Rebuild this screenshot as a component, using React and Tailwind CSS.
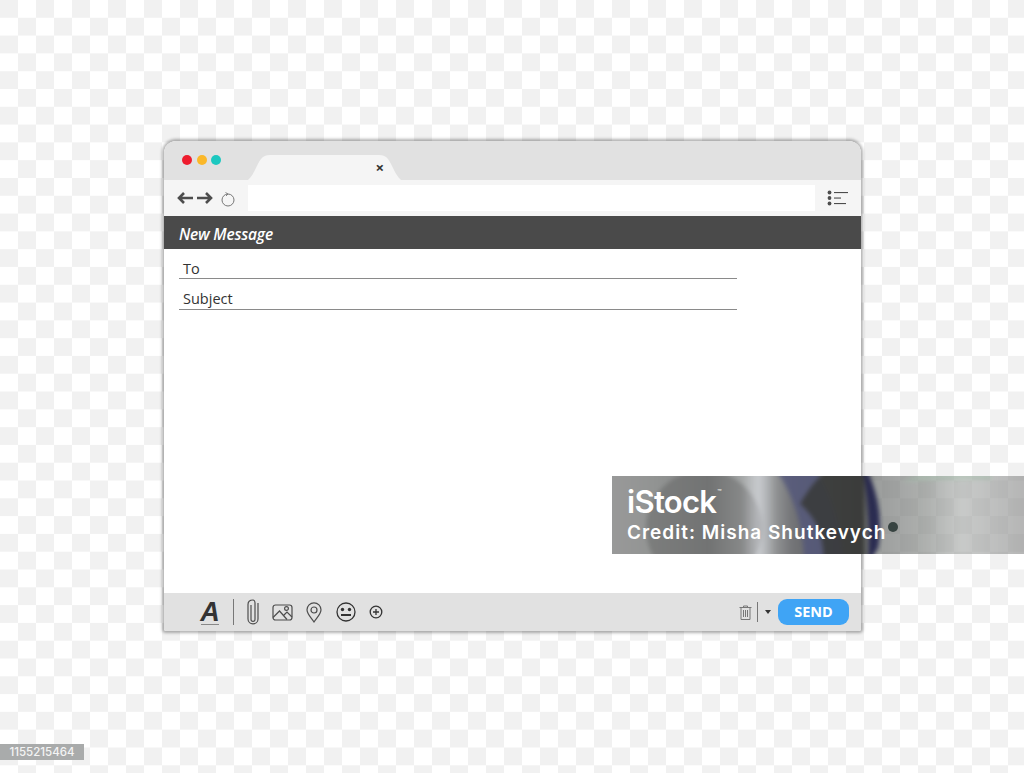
import React from 'react';

const openSans = "font-['Open_Sans',sans-serif]";

function BackForward() {
  return (
    <svg width="36" height="14" viewBox="0 0 36 14" fill="none" stroke="#4d4d4d" strokeWidth="2.600">
      <path d="M16 7H2M7 2 2 7l5 5" />
      <path d="M20 7h14M29 2l5 5-5 5" />
    </svg>
  );
}

function Reload() {
  return (
    <svg width="14" height="16" viewBox="0 0 14 16" fill="none" stroke="#777" strokeWidth="1">
      <circle cx="7" cy="9" r="6" />
      <path d="M4.500 1.500 7 3 5 5" strokeWidth="0.900" />
    </svg>
  );
}

function ListIcon() {
  return (
    <svg width="22" height="16" viewBox="0 0 22 16" fill="#4d4d4d">
      <circle cx="2.500" cy="2.500" r="1.900" />
      <circle cx="2.500" cy="8" r="1.900" />
      <circle cx="2.500" cy="13.500" r="1.900" />
      <rect x="7" y="2" width="14" height="1.100" />
      <rect x="7" y="7.500" width="7" height="1.100" />
      <rect x="7" y="13" width="12" height="1.100" />
    </svg>
  );
}

function Clip() {
  return (
    <svg width="12" height="26" viewBox="0 0 12 26" fill="none" stroke="#4d4d4d" strokeWidth="1.200">
      <path d="M4 6v14.500c0 2.500 4 2.500 4 0V4C8 2 7 1 6 1 3 1 1 2.500 1 5.500V20c0 6.500 10 6.500 10 0V4" />
    </svg>
  );
}

function ImageIcon() {
  return (
    <svg width="21" height="17" viewBox="0 0 21 17" fill="none" stroke="#4d4d4d" strokeWidth="1.200">
      <rect x="1" y="1" width="19" height="15" rx="2.500" />
      <path d="M1 13.500 7.500 7 15 15.500M12 11l3-3 5 5" />
      <circle cx="14.500" cy="4.500" r="1.900" />
    </svg>
  );
}

function Pin() {
  return (
    <svg width="16" height="21" viewBox="0 0 16 21" fill="none" stroke="#4d4d4d" strokeWidth="1.200">
      <path d="M8 20C5 15.500 1 12 1 7.800a7 7 0 0 1 14 0C15 12 11 15.500 8 20Z" />
      <circle cx="8" cy="8" r="3" />
    </svg>
  );
}

function Smile() {
  return (
    <svg width="20" height="20" viewBox="0 0 20 20" fill="none" stroke="#333" strokeWidth="1.300">
      <circle cx="10" cy="10" r="9" />
      <circle cx="6.500" cy="7.500" r="1.700" fill="#333" stroke="none" />
      <circle cx="13.500" cy="7.500" r="1.700" fill="#333" stroke="none" />
      <path d="M5 13h10" strokeWidth="2" />
    </svg>
  );
}

function Plus() {
  return (
    <svg width="14" height="14" viewBox="0 0 14 14" fill="none" stroke="#333" strokeWidth="1.300">
      <circle cx="7" cy="7" r="5.800" />
      <path d="M4 7h6M7 4v6" />
    </svg>
  );
}

function Trash() {
  return (
    <svg width="13" height="15" viewBox="0 0 13 15" fill="none" stroke="#777" strokeWidth="1">
      <path d="M0.500 2.500h12M4.500 2.500V1h4v1.500M2 2.500V14.500h9V2.500M4.500 5v7M6.500 5v7M8.500 5v7" />
    </svg>
  );
}

function Watermark() {
  return (
    <div className="absolute left-[612px] top-[476px] w-[412px] h-[78px] overflow-hidden">
      {/* drawn 12px past the band so the blur doesn't soften its edges */}
      <svg className="absolute left-[-12px] top-[-12px] blur-[2px]" width="436" height="102" viewBox="-12 -12 436 102">
        <defs>
          <linearGradient id="band" x1="0" y1="0" x2="1" y2="0">
            <stop offset="0" stopColor="#959595" stopOpacity="0.95" />
            <stop offset="0.12" stopColor="#8c8e8d" stopOpacity="0.95" />
            <stop offset="0.25" stopColor="#7d7f7f" stopOpacity="0.95" />
            <stop offset="0.36" stopColor="#aeb1b1" stopOpacity="0.95" />
            <stop offset="0.44" stopColor="#6c6d70" stopOpacity="0.95" />
            <stop offset="0.6" stopColor="#3e403e" stopOpacity="0.95" />
            <stop offset="0.63" stopColor="#6f7371" stopOpacity="0.7" />
            <stop offset="0.75" stopColor="#7d817e" stopOpacity="0.62" />
            <stop offset="0.83" stopColor="#a3a6a4" stopOpacity="0.6" />
            <stop offset="1" stopColor="#828282" stopOpacity="0.62" />
          </linearGradient>
          <linearGradient id="sheen" x1="0" y1="0" x2="1" y2="0">
            <stop offset="0" stopColor="#e4e6ee" stopOpacity="0" />
            <stop offset="0.5" stopColor="#e4e6ee" stopOpacity="0.45" />
            <stop offset="1" stopColor="#e4e6ee" stopOpacity="0" />
          </linearGradient>
        </defs>
        <rect x="-12" y="-12" width="436" height="102" fill="url(#band)" />
        <circle cx="92" cy="52" r="58" fill="#4f4f4f" fillOpacity="0.35" />
        <rect x="130" y="-12" width="34" height="102" fill="url(#sheen)" />
        <path d="M160-12h42c6 16 26 40 30 102h-40c0-40-10-72-32-102Z" fill="#54577c" fillOpacity="0.8" />
        <path d="M188 28c16 14 24 30 24 62h40V-12h-28c-14 8-26 22-36 40Z" fill="#383a38" fillOpacity="0.85" />
        <path d="M250-12c14 18 22 54 16 84-4 6-6 10-10 18 2-34 0-70-6-102Z" fill="#20214a" fillOpacity="0.9" />
        <path d="M290 6c26-16 50-10 90-10v8c-30 0-60 0-90 2Z" fill="#a6c4ac" fillOpacity="0.4" />
      </svg>
      <svg className="absolute left-[276px] top-[46px]" width="10" height="10" viewBox="0 0 10 10">
        <circle cx="5" cy="5" r="5" fill="#374341" />
      </svg>
      <div className="relative pl-[15px] pt-[10px] font-['Inter',sans-serif] text-white">
        <div className="flex items-start h-[31px]">
          <span className="text-[31px] font-semibold leading-[31px] tracking-[-0.700px]">iStock</span>
          <span className="ml-px text-[7px] leading-[10px] mt-[2px]">™</span>
        </div>
        <div className="mt-[4px] text-[19px] font-semibold leading-[24px] tracking-[1px] whitespace-nowrap">Credit: Misha Shutkevych</div>
      </div>
    </div>
  );
}

export default function App() {
  return (
    <div className="relative w-[1024px] h-[773px] overflow-hidden bg-white bg-[repeating-conic-gradient(#ffffff_0_25%,#f1f1f1_0_50%)] bg-size-[36px_35.600px]">
      <div className="pl-[164px] pt-[141px]">
        <div className="w-[697px] h-[490px] flex flex-col rounded-t-[12px] rounded-b-[2px] overflow-hidden bg-white shadow-[0_0_3px_2px_rgba(0,0,0,0.3)]">
          {/* Tab strip */}
          <div className="h-[39px] shrink-0 bg-[#e1e1e1] flex items-start pl-[18px]">
            <div className="flex gap-[4.500px] pt-[14px]">
              <span className="w-[10px] h-[10px] rounded-full bg-[#ee1c2e]" />
              <span className="w-[10px] h-[10px] rounded-full bg-[#fbb829]" />
              <span className="w-[10px] h-[10px] rounded-full bg-[#1cc8c0]" />
            </div>
            <div className="relative ml-[27px] mt-[14px]">
              <svg className="block" width="153" height="25" viewBox="0 0 153 25" fill="#f5f5f5">
                <path d="M0 25C6 20 9 9 13 4 15 1.500 18 0 22 0h109c4 0 7 1.500 9 4 4 5 7 16 13 21Z" />
              </svg>
              <span className={`absolute right-[17px] top-[5px] text-[#333] text-[15px] leading-[15px] font-bold ${openSans}`}>×</span>
            </div>
          </div>

          {/* Address bar */}
          <div className="h-[36px] shrink-0 bg-[#f5f5f5] flex items-center pl-[13px] pr-[12px]">
            <BackForward />
            <div className="ml-[8px] mt-[2px] flex"><Reload /></div>
            <div className="ml-[13px] w-[567px] h-[26px] bg-white" />
            <div className="ml-auto flex"><ListIcon /></div>
          </div>

          {/* Title */}
          <div className="h-[33px] shrink-0 bg-[#4a4a4a] flex items-center pl-[15px] pt-[4px]">
            <span className={`text-white italic font-semibold text-[15.500px] tracking-[-0.200px] ${openSans}`}>New Message</span>
          </div>

          {/* Fields */}
          <div className={`flex-1 pl-[15px] pt-[10px] text-[#333] text-[14.500px] ${openSans}`}>
            <div className="w-[558px] h-[20px] border-b border-[#8a8a8a] pl-[4px] leading-[20px]">To</div>
            <div className="mt-[10px] w-[558px] h-[21px] border-b border-[#8a8a8a] pl-[4px] leading-[20px]">Subject</div>
          </div>

          {/* Footer */}
          <div className="h-[38px] shrink-0 bg-[#e1e1e1] flex items-center pl-[36px] pr-[12px]">
            <div className="w-[20px] flex flex-col items-center">
              <span className="font-['Liberation_Sans',sans-serif] italic font-bold text-[#333] text-[27px] leading-[24px]">A</span>
              <span className="block w-[18px] h-px bg-[#888]" />
            </div>
            <span className="ml-[13px] w-px h-[26px] bg-[#777]" />
            <div className="ml-[13px] flex"><Clip /></div>
            <div className="ml-[13px] flex"><ImageIcon /></div>
            <div className="ml-[13px] flex"><Pin /></div>
            <div className="ml-[14px] flex"><Smile /></div>
            <div className="ml-[13px] flex"><Plus /></div>

            <div className="ml-auto flex"><Trash /></div>
            <span className="ml-[5px] w-px h-[20px] bg-[#777]" />
            <span className="ml-[7px] w-0 h-0 border-x-[3.500px] border-x-transparent border-t-[4px] border-t-[#333]" />
            <button type="button" className={`ml-[7px] w-[71px] h-[26px] rounded-[9px] bg-[#3fa4f5] text-white text-[14.500px] leading-[26px] font-bold ${openSans}`}>
              SEND
            </button>
          </div>
        </div>
      </div>

      <Watermark />

      <div className="absolute left-0 top-[744px] w-[84px] h-[16px] bg-[#a9abab] text-[#f4f4f4] text-center font-['Inter',sans-serif] font-medium text-[11.500px] leading-[16px]">
        1155215464
      </div>
    </div>
  );
}
